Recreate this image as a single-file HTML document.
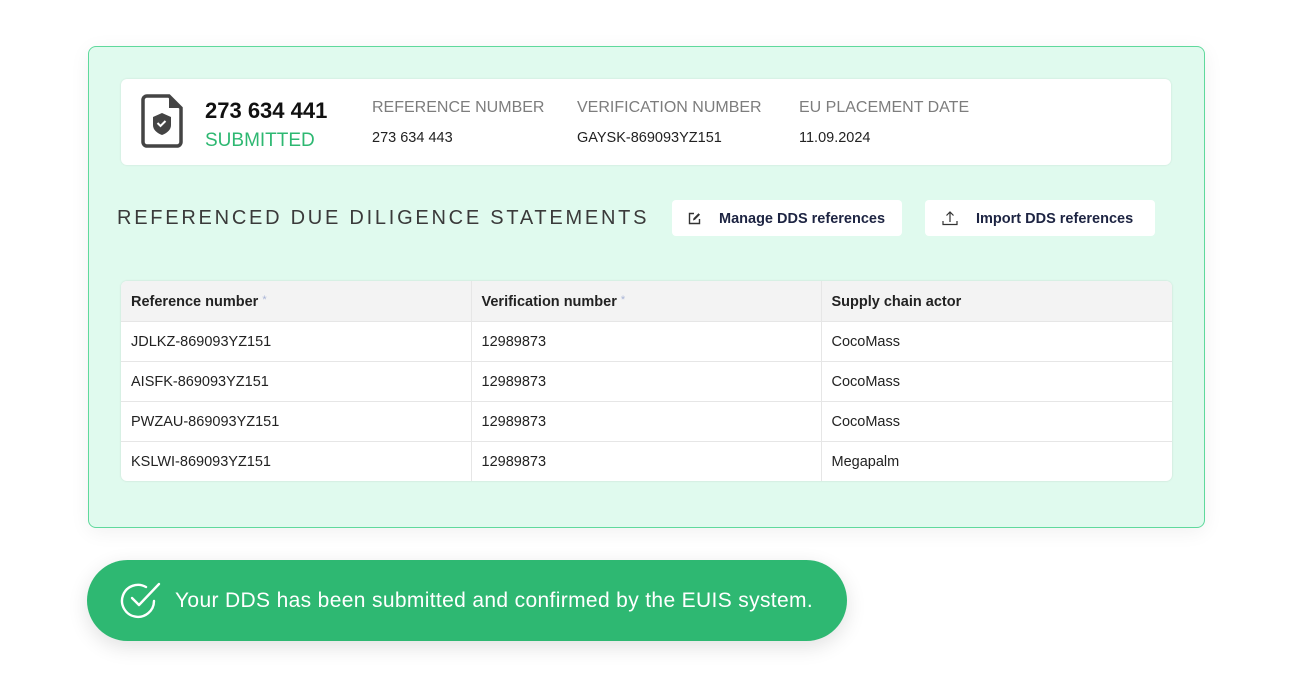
<!DOCTYPE html><html><head><style>
body{margin:0;width:1290px;height:690px;background:#fff;font-family:"Liberation Sans",sans-serif;position:relative;overflow:hidden}
.panel{position:absolute;left:88px;top:46px;width:1115px;height:480px;background:#e0faee;border:1px solid #5fd99c;border-radius:8px;box-shadow:0 4px 20px rgba(0,0,0,.06)}
.card{position:absolute;left:121px;top:79px;width:1050px;height:86px;background:#fff;border-radius:6px;box-shadow:0 0 2px rgba(0,0,0,.1)}
.abs{position:absolute;white-space:nowrap}
.lbl{color:#7d7d7d;font-size:16px}
.val{color:#222;font-size:14.5px}
.btn{position:absolute;top:200px;height:36px;background:#fff;border-radius:4px;font-size:14.5px;font-weight:bold;color:#1d2442}
table{position:absolute;left:121px;top:281px;width:1051px;border-collapse:collapse;background:#fff;border-radius:6px;overflow:hidden;font-size:14.5px;color:#222;box-shadow:0 0 2px rgba(0,0,0,.12)}
td,th{height:38px;padding:2px 10px 0;border:1px solid #e6e6e6;text-align:left;box-sizing:border-box}
tr{height:40px}
th{background:#f3f3f3;font-weight:bold}
tr:first-child th{border-top:none}
td:first-child,th:first-child{border-left:none}
td:last-child,th:last-child{border-right:none}
tr:last-child td{border-bottom:none}
.star{color:#a9b4d6;font-weight:normal;font-size:11px;vertical-align:top}
.toast{position:absolute;left:87px;top:560px;width:760px;height:81px;background:#2eb872;border-radius:41px;box-shadow:0 6px 20px rgba(0,0,0,.12)}
</style></head><body>
<div class="panel"></div>
<div class="card"></div>
<svg class="abs" style="left:141px;top:94px" width="42" height="54" viewBox="0 0 42 54"><path d="M6 2H28L40 14V48a4 4 0 0 1-4 4H6a4 4 0 0 1-4-4V6a4 4 0 0 1 4-4z" fill="none" stroke="#444" stroke-width="3.5"/><path d="M28 2V14H40" fill="#444"/><path d="M12 23l9-4 9 4v8c0 5-4 8-9 10-5-2-9-5-9-10z" fill="#444"/><path d="M16.5 29l3 3 5-5" fill="none" stroke="#fff" stroke-width="2"/></svg>
<div class="abs" style="left:205px;top:98px;font-size:22px;font-weight:bold;color:#111">273 634 441</div>
<div class="abs" style="left:205px;top:130px;font-size:19px;color:#2eb872">SUBMITTED</div>
<div class="abs lbl" style="left:372px;top:99px">REFERENCE NUMBER</div>
<div class="abs val" style="left:372px;top:130px">273 634 443</div>
<div class="abs lbl" style="left:577px;top:99px">VERIFICATION NUMBER</div>
<div class="abs val" style="left:577px;top:130px">GAYSK-869093YZ151</div>
<div class="abs lbl" style="left:799px;top:99px">EU PLACEMENT DATE</div>
<div class="abs val" style="left:799px;top:130px">11.09.2024</div>
<div class="abs" style="left:117px;top:207px;font-size:20px;letter-spacing:2.75px;color:#3a3a3a">REFERENCED DUE DILIGENCE STATEMENTS</div>
<div class="btn" style="left:672px;width:230px"><svg class="abs" style="left:16px;top:12px" width="13" height="13" viewBox="0 0 13 13"><path d="M6 1.5H1.5V11.5H11.5V7" fill="none" stroke="#333" stroke-width="1.4"/><path d="M5 8.5L5.5 6.2 10.5 1.2 12 2.7 7 7.7z" fill="#333"/></svg><span class="abs" style="left:47px;top:11px">Manage DDS references</span></div>
<div class="btn" style="left:925px;width:230px"><svg class="abs" style="left:17px;top:10px" width="16" height="16" viewBox="0 0 16 16"><path d="M8 12V2M4.5 5.5L8 2l3.5 3.5M1 11v3.5h14V11" fill="none" stroke="#333" stroke-width="1.2"/></svg><span class="abs" style="left:51px;top:11px">Import DDS references</span></div>
<table>
<tr><th style="width:350px">Reference number <span class="star">*</span></th><th style="width:350px">Verification number <span class="star">*</span></th><th>Supply chain actor</th></tr>
<tr><td>JDLKZ-869093YZ151</td><td>12989873</td><td>CocoMass</td></tr>
<tr><td>AISFK-869093YZ151</td><td>12989873</td><td>CocoMass</td></tr>
<tr><td>PWZAU-869093YZ151</td><td>12989873</td><td>CocoMass</td></tr>
<tr><td>KSLWI-869093YZ151</td><td>12989873</td><td>Megapalm</td></tr>
</table>
<div class="toast"><svg class="abs" style="left:33px;top:21px" width="42" height="40" viewBox="0 0 42 40"><path d="M34 20A16 16 0 1 1 26 6" fill="none" stroke="#fff" stroke-width="2.4" stroke-linecap="round"/><path d="M12 17l7 7L39 3" fill="none" stroke="#fff" stroke-width="2.4" stroke-linecap="round" stroke-linejoin="round"/></svg>
<div class="abs" style="left:88px;top:29px;font-size:21px;letter-spacing:0.35px;color:#fff">Your DDS has been submitted and confirmed by the EUIS system.</div></div>
</body></html>
